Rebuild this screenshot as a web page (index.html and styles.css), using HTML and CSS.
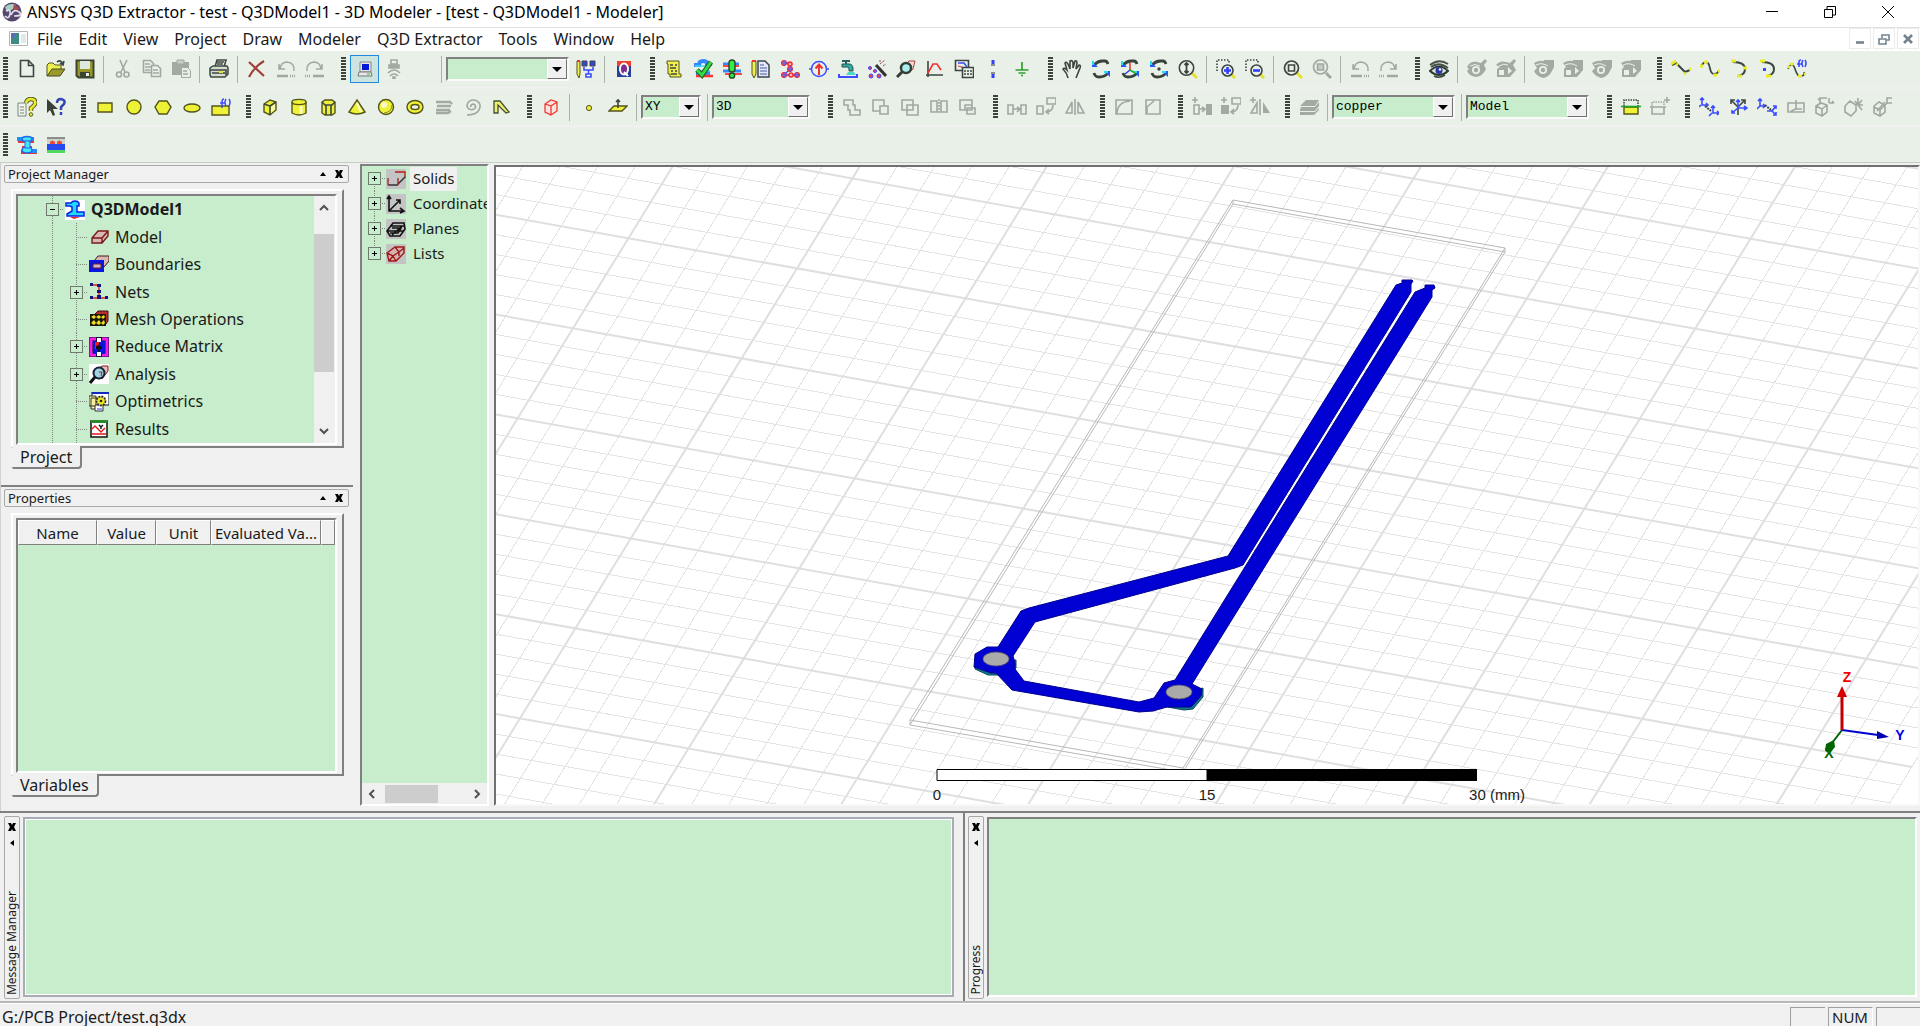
FILE: index.html
```html
<!DOCTYPE html>
<html lang="en">
<head>
<meta charset="utf-8">
<title>ANSYS Q3D Extractor - test - Q3DModel1 - 3D Modeler</title>
<link rel="stylesheet" href="styles.css">
</head>
<body>
<svg class="sprite" aria-hidden="true">
  <!-- file and edit -->
  <symbol id="new" viewBox="0 0 20 20"><path d="M3.500 1.500h8l5 5v11h-13z" class="ol"/><path d="M11.500 1.500v5h5" class="ol"/></symbol>
  <symbol id="open" viewBox="0 0 20 20"><path d="M1 17V6l2-2h4l2 2h6v4" class="yl"/><path d="M1 17l5-7h13l-5 7z" fill="#9a9a2c" stroke="#4a4a1c"/><path d="M11 3q4-3 6 2m-3-1l3 2 1-4" class="ol"/></symbol>
  <symbol id="save" viewBox="0 0 20 20"><path d="M1.500 1.500h17v17h-15l-2-2z" fill="#98982a" stroke="#3c4434" stroke-width="2"/><path d="M5 2h10v8H5z" fill="#dfe8dc"/><path d="M5 13h10v5H5z" fill="#3c4434"/><path d="M11 14h3v3h-3z" fill="#e8f0e8"/></symbol>
  <symbol id="cut" viewBox="0 0 20 20"><g class="gr"><path d="M7 1l5 12M14 1L8 13"/><circle cx="6" cy="15.500" r="2.500"/><circle cx="13.500" cy="15.500" r="2.500"/></g></symbol>
  <symbol id="copy" viewBox="0 0 20 20"><g class="gr"><path d="M1.500 1.500h7l3 3v9h-10z"/><path d="M9.500 6.500h6l3 3v8h-9z" fill="#e8f0e8"/><path d="M3 5h5M3 8h6M3 11h5M11 11h5M11 14h6"/></g></symbol>
  <symbol id="paste" viewBox="0 0 20 20"><path d="M1 3h17v13H1z" fill="#a2aaa2"/><path d="M6 1h7v4H6z" fill="#c6cec6" stroke="#a2aaa2"/><path d="M10.500 8.500h6l3 3v7h-9z" fill="#e8f0e8" stroke="#a2aaa2"/><path d="M12 12h4M12 15h5" class="gr"/></symbol>
  <symbol id="print" viewBox="0 0 20 20"><path d="M6 8l2-7h9l-2 7z" fill="#fff" class="ol"/><path d="M8 3h7M8 5h6" class="ol"/><path d="M1 9l3-2h14l1 2v6l-3 3H2l-1-2z" fill="#d4dcd0" stroke="#3c4640" stroke-width="1.500"/><path d="M1 11h16v5M3 14h13" class="ol"/><path d="M10 12h4v2h-4z" fill="#e6e63a"/></symbol>
  <symbol id="delete" viewBox="0 0 20 20"><path d="M2 3l15 14M17 2Q8 7 2 18" fill="none" stroke="#a04038" stroke-width="2.200"/></symbol>
  <symbol id="undo" viewBox="0 0 20 20"><g class="gr"><path d="M4 10Q5 3 11 3q8 1 7 9M3 5v5h6" stroke-width="1.500"/><path d="M1 17h11" stroke-width="2.500"/><path d="M14 17h6" stroke-width="2.500" stroke-dasharray="1 1"/></g></symbol>
  <symbol id="redo" viewBox="0 0 20 20"><g class="gr"><path d="M16 10Q15 3 9 3Q1 4 2 12M17 5v5h-6" stroke-width="1.500"/><path d="M8 17h11" stroke-width="2.500"/><path d="M0 17h6" stroke-width="2.500" stroke-dasharray="1 1"/></g></symbol>
  <symbol id="local" viewBox="0 0 20 20"><path d="M5 3h11v10H5z" fill="#e4e4e4" stroke="#888"/><path d="M7 5h7v6H7z" fill="#0018d8"/><path d="M4 13h12l1 4H3z" fill="#e8e8e8" stroke="#777"/><path d="M12 15h3" stroke="#2c2" /></symbol>
  <symbol id="queue" viewBox="0 0 20 20"><g class="gr"><path d="M7 1h6v4H7z"/><path d="M5 6h10v3H5z" fill="#a2aaa2"/><path d="M4 14q6-6 12 0M6 17q4-4 8 0"/><path d="M9 18h2v2H9z" fill="#a2aaa2"/></g></symbol>
  <symbol id="edit-net" viewBox="0 0 20 20"><path d="M1 2h3v13l-1 4-2-4z" class="yl"/><path d="M1 1h3v2H1z" fill="#e33"/><path d="M6 2h5v5H6zM14 2h5v5h-5z" fill="#3448c8" stroke="#445"/><path d="M8 8v3h9V8M12.500 11v4" class="bl"/><path d="M10 15h5v3h-5z" fill="#fff" class="bl"/></symbol>
  <symbol id="qbox" viewBox="0 0 20 20"><path d="M3 2h14v16H3z" fill="#26409c"/><path d="M3 2h14v5H3z" fill="#f04030"/><ellipse cx="10" cy="10" rx="4" ry="5.500" fill="#7c2f8c" stroke="#fff" stroke-width="2"/><path d="M10 13l4 4" stroke="#fff" stroke-width="2"/></symbol>
  <!-- design actions -->
  <symbol id="list" viewBox="0 0 20 20"><path d="M3 2h12v13h2v3H6v-3H4V5H3z" class="yl"/><path d="M6 6h3m2 0h2M6 9h6M7 12h2m2 0h2M7 15h6" class="ol"/></symbol>
  <symbol id="validate" viewBox="0 0 20 20"><path d="M1 6h5q0-4 4-4t4 3h5M3 14h14" fill="none" stroke="#38f" stroke-width="4"/><path d="M2 7h16M4 12h13" stroke="#3df" stroke-width="1.500"/><path d="M3 17h17" stroke="#f33" stroke-width="2.500"/><path d="M4 11l5 5L18 3" fill="none" stroke="#265c26" stroke-width="5"/><path d="M4 11l5 5L18 3" fill="none" stroke="#3d4" stroke-width="3"/></symbol>
  <symbol id="analyze" viewBox="0 0 20 20"><path d="M1 5h16M1 12h18" stroke="#38f" stroke-width="3"/><path d="M1 7h16M3 15h17" stroke="#f44" stroke-width="2"/><rect x="7" y="1" width="6" height="12" rx="3" fill="#3e4" stroke="#274c27" stroke-width="1.500"/><circle cx="10" cy="16.500" r="2.600" fill="#3e4" stroke="#274c27" stroke-width="1.500"/></symbol>
  <symbol id="notes" viewBox="0 0 20 20"><path d="M1 2h4v13l-2 4-2-4z" class="yl"/><path d="M1 1h4v2H1z" fill="#e33"/><path d="M7 2h7l4 4v12H7z" fill="#e4e8f8" stroke="#3c4650" stroke-width="1.500"/><path d="M9 6h4M9 9h7M9 12h7M9 15h7" stroke="#4458a8"/></symbol>
  <symbol id="netid" viewBox="0 0 20 20"><path d="M4 4h5l1 6-6 6h13" fill="none" stroke="#3c4cff" stroke-width="1.300"/><g fill="#fbb" stroke="#f03030" stroke-width="1.600"><circle cx="4" cy="4" r="2.200"/><circle cx="10" cy="5" r="2"/><circle cx="10" cy="10" r="2.200"/><circle cx="4" cy="16" r="2.200"/><circle cx="11" cy="16" r="2"/><circle cx="17" cy="16" r="2.200"/></g><path d="M4 1v6M1 4h6M10 7v6M7 10h6M4 13v6M1 16h6M17 13v6M14 16h6" stroke="#3c4cff"/></symbol>
  <symbol id="source" viewBox="0 0 20 20"><circle cx="10" cy="10" r="7.500" class="bl" stroke-width="1.500"/><path d="M10 16V6M6.500 9.500L10 5.500l3.500 4" fill="none" stroke="#f03030" stroke-width="2"/><path d="M0 10h3M17 10h3" class="bl"/></symbol>
  <symbol id="tap" viewBox="0 0 20 20"><path d="M4 2h8M8 2v3" fill="none" stroke="#2a6060" stroke-width="2"/><path d="M4 5h7q4 0 4 5v2h-4v-2q0-2-2-2H4z" fill="#2ab0a0" stroke="#2a5050"/><path d="M10 13h6l2 3H8z" fill="#4cd8c8"/><path d="M1 15v3h18v-3" class="bl" stroke-width="2"/></symbol>
  <symbol id="wand" viewBox="0 0 20 20"><path d="M9 6l10 11" stroke="#333" stroke-width="3"/><g fill="#e44" stroke="#44f"><circle cx="3" cy="9" r="1.500"/><circle cx="8" cy="12" r="1.500"/><circle cx="4" cy="17" r="2"/><circle cx="12" cy="17" r="2"/></g><path d="M13 5l5-4M16 7l3-2M12 2l2 0" stroke="#844" stroke-dasharray="2 1"/></symbol>
  <symbol id="solve" viewBox="0 0 20 20"><path d="M9 6l4-4h6l-2 8-3 3" fill="#f4dcd8" stroke="#b04038"/><circle cx="10" cy="9" r="5" fill="#aee" stroke="#334038" stroke-width="2.500"/><path d="M6 13l-5 5" stroke="#333c38" stroke-width="3"/></symbol>
  <symbol id="chart" viewBox="0 0 20 20"><path d="M3 2v16M1 16h17" class="ol"/><path d="M3 14L8 5h4l4 6" fill="none" stroke="#f03030" stroke-width="1.600"/></symbol>
  <symbol id="report" viewBox="0 0 20 20"><path d="M1.500 1.500h13v10h-13z" class="ol"/><path d="M4 4h6l3 4" class="bl"/><path d="M4 7q5 0 6 4" fill="none" stroke="#e33"/><path d="M8.500 8.500h11v10h-11z" fill="#e8f0e8" class="ol"/><path d="M10 12h8M10 15h8" class="ol" stroke-dasharray="2 1"/></symbol>
  <symbol id="sweep" viewBox="0 0 20 20"><path d="M10 1v5M10 14v5" stroke="#3040ff" stroke-width="3"/><path d="M8 6h4M8 14h4" stroke="#889088" stroke-width="2"/></symbol>
  <symbol id="ground" viewBox="0 0 20 20"><path d="M10 3v8M3.500 11h13M6.500 14h7M9 16.500h2" stroke="#30a030" stroke-width="1.700"/></symbol>
  <!-- view -->
  <symbol id="pan" viewBox="0 0 20 20"><path d="M6 19Q5 14 1 10q1-2 4 1L3 4q1-2 3 1l2 5L8 2q2-1 3 1v6l2-7q2-1 2 2l-1 6 3-4q2 0 1 3l-4 10" class="ol"/></symbol>
  <symbol id="rotate" viewBox="0 0 20 20"><path d="M3 6q4-4 8-4h3q2 0 3 3M3 14q1 4 5 4 6 0 9-4" fill="none" stroke="#384238" stroke-width="2.800"/><path d="M1 2v6h6zM19 18v-6h-6z" fill="#2858f0"/><path d="M1 2h2v4H1zM13 12h4v2h-4z" fill="#2de"/></symbol>
  <symbol id="rotaxis" viewBox="0 0 20 20"><use href="#rotate"/><path d="M10 4v7" stroke="#f03030" stroke-width="1.500"/><path d="M10 11l-5 4" stroke="#3030ff" stroke-width="1.500"/><path d="M10 11l5 3" stroke="#20b020" stroke-width="1.500"/></symbol>
  <symbol id="rotcenter" viewBox="0 0 20 20"><use href="#rotate"/><circle cx="10" cy="10" r="1.700" fill="#384238"/></symbol>
  <symbol id="zoomdyn" viewBox="0 0 20 20"><path d="M14 14l5 5" stroke="#e4e030" stroke-width="3"/><circle cx="8.500" cy="9" r="7.200" class="ol"/><path d="M8.500 4v10M6.500 6l2-2 2 2M6.500 12l2 2 2-2" class="ol" stroke-width="1.800"/></symbol>
  <symbol id="zoomin" viewBox="0 0 20 20"><path d="M1 12V1h12v4" class="ol" stroke-dasharray="1.500 1.500"/><path d="M15 15l4 4" stroke="#e4e030" stroke-width="3"/><circle cx="11.500" cy="11.500" r="5.500" class="ol"/><path d="M8 11.500h7M11.500 8v7" stroke="#3040ff" stroke-width="2.600"/></symbol>
  <symbol id="zoomout" viewBox="0 0 20 20"><path d="M1 12V1h12v4" class="ol" stroke-dasharray="1.500 1.500"/><path d="M15 15l4 4" stroke="#e4e030" stroke-width="3"/><circle cx="11.500" cy="11.500" r="5.500" class="ol"/><path d="M8 11.500h7" stroke="#3040ff" stroke-width="2.600"/></symbol>
  <symbol id="fitall" viewBox="0 0 20 20"><path d="M14 14l5 5" stroke="#e4e030" stroke-width="3"/><circle cx="8.500" cy="9" r="7" class="ol" stroke-width="1.700"/><path d="M5.500 6h6v6h-6z" class="ol"/></symbol>
  <symbol id="fitsel" viewBox="0 0 20 20"><g class="gr"><path d="M14 14l5 5" stroke-width="3"/><circle cx="8.500" cy="8" r="7" stroke-width="1.700"/><path d="M5.500 5h6v6h-6z" fill="#c4ccc4"/></g></symbol>
  <symbol id="eye" viewBox="0 0 20 20"><path d="M1 6q9-7 18-1M2 8q8-6 17 1" fill="none" stroke="#48544a" stroke-width="1.800"/><path d="M1 12q9-9 18 0-9 8-18 0z" fill="#d8e4dc" stroke="#303c34" stroke-width="2"/><circle cx="10" cy="11.500" r="3.500" fill="#2838a8"/><circle cx="11" cy="10.500" r="1.200" fill="#fff"/><path d="M5 17q5 3 11-1" class="ol"/></symbol>
  <symbol id="eyeoff" viewBox="0 0 20 20"><path d="M0 8q3-6 10-5l4 1 4-4 2 2-3 4 2 4q-3 7-10 8Q2 17 0 12l2-2z" fill="#a2aaa2"/><circle cx="9" cy="11" r="4" fill="#e8f0e8"/><circle cx="9" cy="11" r="2.200" fill="#a2aaa2"/><path d="M3 7q5-3 10 0" stroke="#e8f0e8" fill="none"/></symbol>
  <symbol id="boxoff" viewBox="0 0 20 20"><path d="M0 6q4-5 10-3l4 1 4-4 2 2-3 4 3 5-6 7H1v-8l3-2z" fill="#a2aaa2"/><path d="M3 11h5v5H3zM12 8l4 4-4 3z" fill="#e8f0e8"/><path d="M3 7q5-3 9-1" stroke="#e8f0e8" fill="none"/></symbol>
  <symbol id="eyeshow" viewBox="0 0 20 20"><path d="M0 4q5-3 10-2V1h10v7l-2 4q-3 6-9 7Q2 17 0 12l3-3z" fill="#a2aaa2"/><circle cx="9" cy="11" r="4" fill="#e8f0e8"/><circle cx="9" cy="11" r="2.200" fill="#a2aaa2"/><path d="M2 6q6-3 12 1" stroke="#e8f0e8" fill="none"/></symbol>
  <symbol id="boxshow" viewBox="0 0 20 20"><path d="M0 4q5-3 10-2V1h10v10l-6 7H1v-8l2-2z" fill="#a2aaa2"/><path d="M3 11h5v5H3zM12 8l4 4-4 3z" fill="#e8f0e8"/><path d="M2 6q6-3 12 1" stroke="#e8f0e8" fill="none"/></symbol>
  <!-- curves -->
  <symbol id="line" viewBox="0 0 20 20"><path d="M1 6l4-2 9 9 5-2" class="ol" stroke-width="2"/><path d="M0 5l5-3M5 5l2 1M13 14l2 1M18 10h2" stroke="#e8ec28" stroke-width="3"/></symbol>
  <symbol id="spline" viewBox="0 0 20 20"><path d="M1 8Q4 1 8 4c3 3 1 11 6 11q4 0 5-4" class="ol" stroke-width="1.800"/><path d="M0 7h3M4 3h4M13 16h4M18 12h2" stroke="#e8ec28" stroke-width="3"/></symbol>
  <symbol id="arc3" viewBox="0 0 20 20"><path d="M4 3q12 0 12 7 0 6-7 7" class="ol" stroke-width="2"/><path d="M2 2h5M14 9h4M8 17h5" stroke="#e8ec28" stroke-width="3"/></symbol>
  <symbol id="arcc" viewBox="0 0 20 20"><path d="M4 3q12 0 12 7 0 6-7 7" class="ol" stroke-width="2"/><path d="M2 2h5M8 17h5" stroke="#e8ec28" stroke-width="3"/><path d="M5 9h3v3H5z" fill="#3848ff"/></symbol>
  <symbol id="eqcurve" viewBox="0 0 20 20"><path d="M1 10q4-9 7 0t6 7q4 0 3-4" class="ol"/><path d="M0 8h3M3 5h4M11 17h4M17 15h2" stroke="#e8ec28" stroke-width="2.500"/><path d="M12 8V3q0-2 2-2M10 5h5M16 1q-2 3 0 7M18 1q2 3 0 7" class="bl"/></symbol>
  <!-- help -->
  <symbol id="help" viewBox="0 0 20 20"><path d="M1 6h8v13H1z" fill="#eef4ee" stroke="#7c867c"/><path d="M3 10h4M3 13h4M3 16h4" class="gr"/><path d="M9 6q1-4 5-4 5 0 4 5-1 2-4 4v3" fill="none" stroke="#5c5c20" stroke-width="4.500"/><path d="M9 6q1-4 5-4 5 0 4 5-1 2-4 4v3" fill="none" stroke="#eaea30" stroke-width="2.600"/><circle cx="14" cy="17.500" r="1.800" fill="#eaea30" stroke="#5c5c20"/></symbol>
  <symbol id="whatsthis" viewBox="0 0 20 20"><path d="M1 2v14l3-3 3 6 2-1-2-6h5z" fill="#384038"/><path d="M11 6q0-4 4-4 5 1 3 5l-3 3v3M15 15v3" fill="none" stroke="#3444b4" stroke-width="2.500"/></symbol>
  <!-- 2D primitives -->
  <symbol id="rect" viewBox="0 0 20 20"><path d="M3 6h14v9H3z" class="yf"/></symbol>
  <symbol id="circle" viewBox="0 0 20 20"><circle cx="10" cy="10" r="7" class="yf"/></symbol>
  <symbol id="polygon" viewBox="0 0 20 20"><path d="M6 4h8l4 6-4 7H6l-4-7z" class="yf"/></symbol>
  <symbol id="ellipse" viewBox="0 0 20 20"><ellipse cx="10" cy="11" rx="8" ry="4" class="yf"/></symbol>
  <symbol id="eqsurf" viewBox="0 0 20 20"><path d="M1 9h17v9H1z" class="yf"/><path d="M11 11V5q0-3 2-3M9 6h5M15 2q-2 3 0 7M18 2q2 3 0 7" class="bl" stroke-width="1.500"/></symbol>
  <!-- 3D primitives -->
  <symbol id="box" viewBox="0 0 20 20"><path d="M4 7l6-4 6 2v8l-6 5-6-3z" class="yf"/><path d="M4 7l6 2v9M10 9l6-4" class="ol"/><path d="M11 10l4-3v5l-4 4z" fill="#f6f8b0"/></symbol>
  <symbol id="cyl" viewBox="0 0 20 20"><path d="M3 5v11q7 4 14 0V5" class="yf"/><ellipse cx="10" cy="5" rx="7" ry="2.600" class="yf"/><path d="M12 9v8" stroke="#fafac8" stroke-width="3"/></symbol>
  <symbol id="prism" viewBox="0 0 20 20"><path d="M4 5l3-2h7l3 2v11l-3 2H7l-3-2z" class="yf"/><path d="M4 5l3 3h7l3-3M8 8v10M13 8v10" class="ol"/></symbol>
  <symbol id="cone" viewBox="0 0 20 20"><path d="M10 3l8 12q-8 4-16 0z" class="yf"/><path d="M10 6l4 9" stroke="#fafac8" stroke-width="2"/></symbol>
  <symbol id="sphere" viewBox="0 0 20 20"><circle cx="10" cy="10" r="7.500" class="yf"/><circle cx="8" cy="8" r="3" fill="#fafac8"/><path d="M16 8q0 7-8 8" fill="none" stroke="#8a8a30"/></symbol>
  <symbol id="torus" viewBox="0 0 20 20"><ellipse cx="10" cy="10" rx="8" ry="6.500" class="yf"/><ellipse cx="10" cy="10" rx="4" ry="2.500" fill="#e8f0e8" stroke="#54541c" stroke-width="1.500"/></symbol>
  <symbol id="helix" viewBox="0 0 20 20"><path d="M2 5h14l2 2M3 9h14M2 13h14M2 16h12l3-2" fill="none" stroke="#a2aaa2" stroke-width="2.400"/></symbol>
  <symbol id="spiral" viewBox="0 0 20 20"><path d="M4 18q9 0 12-5c3-6-1-10-6-10s-8 6-4 9c4 2 8-1 6-4-2-2-5 0-4 2" class="gr"/></symbol>
  <symbol id="bondwire" viewBox="0 0 20 20"><path d="M2 16V4h6l9 11-3 1-8-8v8z" fill="#eef070" stroke="#44502c" stroke-width="1.300"/></symbol>
  <symbol id="redbox" viewBox="0 0 20 20"><path d="M4 7l6-4 6 2v9l-6 4-6-3zM4 7l6 2v9M10 9l6-4" fill="#f8e4e0" stroke="#f03830" stroke-width="1.300"/></symbol>
  <symbol id="point" viewBox="0 0 20 20"><circle cx="10" cy="11" r="2.600" fill="#f0f030" stroke="#54541c"/></symbol>
  <symbol id="plane" viewBox="0 0 20 20"><path d="M1 14l5-5h13l-5 5z" class="yf"/><path d="M10 11V3M8 5l2-2 2 2" class="ol"/></symbol>
  <!-- booleans and transforms -->
  <symbol id="unite" viewBox="0 0 20 20"><path d="M2 3h9v5h2v5h5v5H8v-5H6V8H2z" class="gr"/></symbol>
  <symbol id="subtract" viewBox="0 0 20 20"><path d="M2 3h11v6H9v5H2zM9 9h8v8H9z" class="gr"/></symbol>
  <symbol id="intersect" viewBox="0 0 20 20"><path d="M2 3h11v10H2zM7 8h11v10H7z" class="gr"/></symbol>
  <symbol id="split" viewBox="0 0 20 20"><path d="M8 4H2v11h6zM12 4h6v11h-6z" class="gr"/><path d="M10 2v15" class="gr" stroke-dasharray="2 1"/></symbol>
  <symbol id="imprint" viewBox="0 0 20 20"><path d="M2 3h12v10H2zM7 8h7v5H7zM9 11h8v6H9z" class="gr"/></symbol>
  <symbol id="move" viewBox="0 0 20 20"><path d="M1 8h5v9H1zM14 8h5v9h-5zM6 12h7M10 10l3 2-3 3" class="gr"/></symbol>
  <symbol id="rotobj" viewBox="0 0 20 20"><path d="M1 9h6v8H1zM11 1h9v6h-9zM17 8q0 6-6 7M13 12l-3 3 3 2" class="gr"/></symbol>
  <symbol id="mirror" viewBox="0 0 20 20"><path d="M10 2v16M7 5v11H1zM13 5v11h6z" class="gr"/></symbol>
  <symbol id="fillet" viewBox="0 0 20 20"><path d="M2 3h16v14H2zM3 17q0-12 13-13" class="gr"/></symbol>
  <symbol id="chamfer" viewBox="0 0 20 20"><path d="M3 3h14v14H3zM4 16V10l7-6" class="gr"/></symbol>
  <symbol id="dupline" viewBox="0 0 20 20"><path d="M3 0v6M0 3h6M2 8h5v9H2zM7 12h6M10 10l3 2-3 3" class="gr"/><path d="M14 7h6v11h-6z" fill="#a2aaa2"/></symbol>
  <symbol id="duprot" viewBox="0 0 20 20"><path d="M3 0v6M0 3h6M11 1h9v6h-9zM17 8q0 6-6 7M13 12l-3 3 3 2" class="gr"/><path d="M0 8h8v9H0z" fill="#a2aaa2"/></symbol>
  <symbol id="dupmir" viewBox="0 0 20 20"><path d="M3 0v6M0 3h6M10 2v16M7 6v10H1z" class="gr"/><path d="M13 5v11h7z" fill="#a2aaa2"/></symbol>
  <symbol id="layers" viewBox="0 0 20 20"><path d="M1 9l6-6h13l-4 6zM1 13l1-3h14l4-5v4l-4 5H1zM1 17v-2h15l4-4v2l-5 5H1z" fill="#a2aaa2"/></symbol>
  <symbol id="section" viewBox="0 0 20 20"><path d="M3 9V3h14v6" class="ol" stroke-dasharray="1.500 1"/><path d="M3 10h14v7H3z" class="yf"/><path d="M0 9.500h20" stroke="#20a828" stroke-width="1.600"/></symbol>
  <symbol id="section2" viewBox="0 0 20 20"><path d="M2 9V5h12v4" class="gr" stroke-dasharray="1.500 1"/><path d="M2 10h12v7H2zM0 10h16M17 0v6M14 3h6" class="gr"/></symbol>
  <!-- coordinate systems -->
  <symbol id="csrel" viewBox="0 0 20 20"><path d="M3 1v7h5M2 8L0 10M14 9v7h6M13 16l-3 3M1 3l2-2 2 2M12 11l2-2 2 2M7 6l2 2-2 2M18 14l2 2-2 2" class="bl" stroke-width="1.600"/><path d="M6 9l6 5" class="ol" stroke-width="2" stroke-dasharray="2 1"/></symbol>
  <symbol id="csrot" viewBox="0 0 20 20"><path d="M10 18V10L4 4M10 10l6-6M13 3h4v4M3 7V3h4" class="ol"/><path d="M10 3v8h8M10 11l-6 5M8 5l2-2 2 2M16 9l3 2-3 2M4 13v3h3" class="bl" stroke-width="1.600"/></symbol>
  <symbol id="csboth" viewBox="0 0 20 20"><path d="M3 2v7h5M3 9l-3 3M19 9l-4 5 4 4M15 14h-5M1 4l2-2 2 2M6 7l2 2-2 2M16 9h3v3M16 18h3v-3" class="bl" stroke-width="1.600"/><path d="M8 8l6 5" class="ol" stroke-width="2" stroke-dasharray="2 1"/></symbol>
  <symbol id="csface" viewBox="0 0 20 20"><path d="M2 6h16v9H2zM10 3v9h6M10 12l-5 2" class="gr"/></symbol>
  <symbol id="csobj" viewBox="0 0 20 20"><path d="M1 9l5-3 6 2v7l-5 4-6-3zM1 9l6 3v7M7 12l5-4M5 6V1h7M14 6V1M14 6h5M3 3l2-2M17 4l2 2" class="gr"/></symbol>
  <symbol id="csobj2" viewBox="0 0 20 20"><path d="M1 9l5-5 6 4v6l-5 5-6-4zM14 8V1M14 8h5M14 8l-3-4M14 8l4 5M18 3l-4 5" class="gr"/></symbol>
  <symbol id="csobj3" viewBox="0 0 20 20"><path d="M1 9l5-4 6 3v7l-5 4-6-3zM1 10l6 3v6M7 13l7-7M14 7V1h5M14 6h5M4 14l8-9" class="gr"/></symbol>
  <!-- design types -->
  <symbol id="q3d" viewBox="0 0 20 20"><path d="M1 6h16v2H1zM4 15h16v4H4zM5 11h10v2H5z" fill="#e03838"/><path d="M0 4h6M14 4h3M6 16h14" stroke="#2090f8" stroke-width="4"/><ellipse cx="10" cy="4" rx="5" ry="2.500" fill="#3fe8f4" stroke="#2468f0" stroke-width="1.500"/><ellipse cx="10" cy="15" rx="5" ry="3" fill="#3fe8f4" stroke="#2468f0" stroke-width="1.500"/><path d="M8 6h5v7H8z" fill="#3fe8f4" stroke="#2468f0"/></symbol>
  <symbol id="q2d" viewBox="0 0 20 20"><path d="M1 3h18v12H1z" fill="#cad4ca"/><path d="M1 2h18v2H1z" fill="#889088"/><path d="M1 9h18v6H1z" fill="#2848f0"/><path d="M4 9V7q2-3 5 0v2zM11 9V7q2-3 5 0v2z" fill="#e84c38"/><path d="M1 15h18v3H1z" fill="#50d860"/></symbol>
  <!-- project tree -->
  <symbol id="t-q3d" viewBox="0 0 20 20"><path d="M0 0h20v20H0z" fill="#fff"/><path d="M5 17l4 2 6-2z" fill="#f02020"/><path d="M1 3h5q1-2 4-2t4 2v3h-2v6h7v4H2v-2l5-3V7L5 6H1z" fill="#20d8f8" stroke="#1020e0" stroke-width="1.500"/></symbol>
  <symbol id="t-model" viewBox="0 0 20 20"><path d="M3 11l6-7h10v5l-6 7H3zM3 11h10v5M13 11l6-7" fill="#d8b8b4" stroke="#7c1818" stroke-width="1.400"/></symbol>
  <symbol id="t-bound" viewBox="0 0 20 20"><path d="M5 6l4-5h11v5l-5 6" fill="#d8b8b4" stroke="#4c1818"/><path d="M0 5h15v12H0z" fill="#0818e0"/><path d="M4 9h8v4H4z" fill="#c8b8d0" stroke="#7c1818"/></symbol>
  <symbol id="t-nets" viewBox="0 0 20 20"><path d="M3 3h7v6M10 9v7M3 16h14" fill="none" stroke="#e02020" stroke-width="1.400"/><path d="M1 1h3v3H1zM8 2h4v3H8zM8 8h4v3H8zM1 14h3v3H1zM8 13h4v4H8zM16 14h3v3h-3z" fill="#101880"/></symbol>
  <symbol id="t-mesh" viewBox="0 0 20 20"><path d="M6 5l3-3h10v10l-2 3" fill="#b83028" stroke="#401010"/><path d="M1 5h16v12H1z" fill="#181808"/><path d="M2 8l3-2 2 2-2 2zM7 8l3-2 2 2-2 2zM12 8l3-2 1 2-2 2zM2 14l3-3 2 3-2 2zM7 14l3-3 2 3-2 2zM12 14l3-3 1 3-2 2z" fill="#f0e020"/></symbol>
  <symbol id="t-reduce" viewBox="0 0 20 20"><path d="M0 0h20v20H0z" fill="#181030"/><path d="M7 2H2v16h5M13 2h5v16h-5" fill="none" stroke="#f020e8" stroke-width="3"/><path d="M4 4h5v13H4zM11 4h5v13h-5z" fill="#0818d8"/><path d="M8 1h4v4H8zM8 15h4v4H8z" fill="#fff"/><path d="M6 5h4v3H8v4H6z" fill="#f01818"/><path d="M7 9h6v3H7z" fill="#111"/></symbol>
  <symbol id="t-analysis" viewBox="0 0 20 20"><path d="M0 0h20v20H0z" fill="#fff"/><path d="M8 6l5-4h6v5l-6 8" fill="#e0c0bc" stroke="#901818"/><circle cx="10" cy="9" r="5.500" fill="#a0d4e0" stroke="#102038" stroke-width="2"/><path d="M10 8h3l-1 4" fill="none" stroke="#902020"/><path d="M6 13l-5 6" stroke="#101018" stroke-width="3"/></symbol>
  <symbol id="t-opt" viewBox="0 0 20 20"><path d="M3 0h17v13H3z" fill="#fff" stroke="#111"/><path d="M3 0h17v2H3z" fill="#1028c0"/><path d="M0 4h7v10H0zM2 6h8v11H2z" fill="#f8f0a0" stroke="#333"/><path d="M6 13h8v6H6z" fill="#fff" stroke="#333"/><path d="M8 17h5" stroke="#33f"/><circle cx="12" cy="9" r="4.500" fill="#f0e820" stroke="#333" stroke-dasharray="2 1" stroke-width="1.800"/><circle cx="12" cy="9" r="1.300" fill="#222"/></symbol>
  <symbol id="t-results" viewBox="0 0 20 20"><path d="M2 2h16v16H2z" fill="#fff" stroke="#111" stroke-width="1.500"/><path d="M2 1h16v3H2z" fill="#28882c"/><path d="M3 10l3-3 6 6 4-4M3 15h14" fill="none" stroke="#e01818" stroke-width="1.400"/><path d="M10 6l2 2 2-2M12 8v2" fill="none" stroke="#111" stroke-width="1.400"/></symbol>
  <!-- history tree -->
  <symbol id="h-solids" viewBox="0 0 20 20"><path d="M0 0h20v20H0z" fill="#c4c4c4"/><path d="M9 3h10v6" fill="none" stroke="#b81818" stroke-width="1.300"/><path d="M19 8l-7 7M2 16h10" fill="none" stroke="#333" stroke-width="1.500"/><path d="M2 9v7M12 9v7" stroke="#a02020" stroke-width="1.300"/></symbol>
  <symbol id="h-coord" viewBox="0 0 20 20"><path d="M0 0h20v20H0z" fill="#c4c4c4"/><path d="M3 2v15h14M3 17L14 6M1 5l2-3 2 3M14 14l4 3-4 2M10 6h4v4" fill="none" stroke="#111" stroke-width="1.600"/></symbol>
  <symbol id="h-planes" viewBox="0 0 20 20"><path d="M0 0h20v20H0z" fill="#c4c4c4"/><path d="M1 12l6-8h11l1 6-5 7H4zM4 7h15M1 12h16M6 9h9l-3 5H4M6 16l10-9" fill="none" stroke="#111" stroke-width="1.600"/></symbol>
  <symbol id="h-lists" viewBox="0 0 20 20"><path d="M0 0h20v20H0z" fill="#c4c4c4"/><path d="M1 9l8-6h9v6l-8 8H3zM1 9l6 3-4 5M7 12l6-4 5-4M10 17l-3-5M9 3l4 5v4" fill="#d4b4b0" stroke="#a01818" stroke-width="1.400"/></symbol>
</svg>

<header class="titlebar">
  <svg class="app-icon" viewBox="0 0 20 20" aria-hidden="true"><circle cx="10" cy="10" r="9.500" fill="#54486c"/><path d="M3 5q5-5 11-2l-3 4-6 3z" fill="#a8d0c0"/><path d="M12 2l5 4-2 4-4-3z" fill="#a84850"/><path d="M4 9q5-3 4 3t-5 2M9 13q3-7 8-3t-5 4" fill="none" stroke="#e4dcf0" stroke-width="1.700"/></svg>
  <h1 class="title">ANSYS Q3D Extractor - test - Q3DModel1 - 3D Modeler - [test - Q3DModel1 - Modeler]</h1>
  <div class="window-controls">
    <button class="win-btn" aria-label="Minimize"><svg viewBox="0 0 12 12"><path d="M0 5.500h12"/></svg></button>
    <button class="win-btn" aria-label="Restore"><svg viewBox="0 0 12 12"><path d="M.5 3.500h8v8h-8zM3 3.500v-3h8.500V9h-3"/></svg></button>
    <button class="win-btn" aria-label="Close"><svg viewBox="0 0 12 12"><path d="M0 0l12 12M12 0L0 12"/></svg></button>
  </div>
</header>

<nav class="menubar">
  <svg class="doc-icon" viewBox="0 0 19 15" aria-hidden="true"><path d="M.5.5h18v14H.5z" fill="#fff" stroke="#b4b4b4"/><path d="M2 2h8v11H2z" fill="#3c8c84"/><path d="M2 2h4v5H2z" fill="#5870b0"/><path d="M12 3h5v9h-5z" fill="#e0e8e8"/></svg>
  <button>File</button><button>Edit</button><button>View</button><button>Project</button><button>Draw</button><button>Modeler</button><button>Q3D Extractor</button><button>Tools</button><button>Window</button><button>Help</button>
  <div class="mdi-controls">
    <button aria-label="Minimize document"><svg viewBox="0 0 12 12"><path d="M2 9.500h8"/></svg></button>
    <button aria-label="Restore document"><svg viewBox="0 0 12 12"><path class="thin" d="M1 6h7v5H1zM4 5V2h7v5H9"/></svg></button>
    <button aria-label="Close document"><svg viewBox="0 0 12 12"><path d="M2 2l8 8M10 2l-8 8"/></svg></button>
  </div>
</nav>

<div class="toolbars">
  <div class="toolbar-row row-standard">
    <div class="toolbar" role="toolbar" aria-label="Standard">
      <button class="tool" aria-label="New"><svg><use href="#new"/></svg></button>
      <button class="tool" aria-label="Open"><svg><use href="#open"/></svg></button>
      <button class="tool" aria-label="Save"><svg><use href="#save"/></svg></button>
      <i class="sep"></i>
      <button class="tool" aria-label="Cut"><svg><use href="#cut"/></svg></button>
      <button class="tool" aria-label="Copy"><svg><use href="#copy"/></svg></button>
      <button class="tool" aria-label="Paste"><svg><use href="#paste"/></svg></button>
      <i class="sep"></i>
      <button class="tool" aria-label="Print"><svg><use href="#print"/></svg></button>
      <i class="sep"></i>
      <button class="tool" aria-label="Delete"><svg><use href="#delete"/></svg></button>
      <button class="tool" aria-label="Undo"><svg><use href="#undo"/></svg></button>
      <button class="tool" aria-label="Redo"><svg><use href="#redo"/></svg></button>
    </div>
    <div class="toolbar" role="toolbar" aria-label="Simulation">
      <button class="tool active" aria-label="Local machine"><svg><use href="#local"/></svg></button>
      <button class="tool" aria-label="Queue"><svg><use href="#queue"/></svg></button>
      <span class="tool-space"></span>
      <i class="sep"></i>
      <label class="combo combo-l"><select aria-label="Configuration"><option></option></select><span class="drop"></span></label>
      <button class="tool" aria-label="Edit configuration"><svg><use href="#edit-net"/></svg></button>
      <i class="sep"></i>
      <button class="tool" aria-label="Insert Q3D design"><svg><use href="#qbox"/></svg></button>
    </div>
    <div class="toolbar" role="toolbar" aria-label="Q3D Extractor">
      <button class="tool" aria-label="List"><svg><use href="#list"/></svg></button>
      <button class="tool" aria-label="Validate"><svg><use href="#validate"/></svg></button>
      <button class="tool" aria-label="Analyze all"><svg><use href="#analyze"/></svg></button>
      <button class="tool" aria-label="Edit notes"><svg><use href="#notes"/></svg></button>
      <button class="tool" aria-label="Assign net"><svg><use href="#netid"/></svg></button>
      <button class="tool" aria-label="Assign source"><svg><use href="#source"/></svg></button>
      <button class="tool" aria-label="Assign sink"><svg><use href="#tap"/></svg></button>
      <button class="tool" aria-label="Auto identify nets"><svg><use href="#wand"/></svg></button>
      <button class="tool" aria-label="Add solution setup"><svg><use href="#solve"/></svg></button>
      <button class="tool" aria-label="Create report"><svg><use href="#chart"/></svg></button>
      <button class="tool" aria-label="Matrix report"><svg><use href="#report"/></svg></button>
      <button class="tool" aria-label="Sweep"><svg><use href="#sweep"/></svg></button>
      <button class="tool" aria-label="Ground"><svg><use href="#ground"/></svg></button>
    </div>
    <div class="toolbar" role="toolbar" aria-label="View">
      <button class="tool" aria-label="Pan"><svg><use href="#pan"/></svg></button>
      <button class="tool" aria-label="Rotate"><svg><use href="#rotate"/></svg></button>
      <button class="tool" aria-label="Rotate around axis"><svg><use href="#rotaxis"/></svg></button>
      <button class="tool" aria-label="Rotate around centre"><svg><use href="#rotcenter"/></svg></button>
      <button class="tool" aria-label="Dynamic zoom"><svg><use href="#zoomdyn"/></svg></button>
      <i class="sep"></i>
      <button class="tool" aria-label="Zoom in"><svg><use href="#zoomin"/></svg></button>
      <button class="tool" aria-label="Zoom out"><svg><use href="#zoomout"/></svg></button>
      <i class="sep"></i>
      <button class="tool" aria-label="Fit all"><svg><use href="#fitall"/></svg></button>
      <button class="tool" aria-label="Fit selection"><svg><use href="#fitsel"/></svg></button>
      <i class="sep"></i>
      <button class="tool" aria-label="Undo view"><svg><use href="#undo"/></svg></button>
      <button class="tool" aria-label="Redo view"><svg><use href="#redo"/></svg></button>
    </div>
    <div class="toolbar" role="toolbar" aria-label="Visibility">
      <button class="tool" aria-label="Visibility"><svg><use href="#eye"/></svg></button>
      <i class="sep"></i>
      <button class="tool" aria-label="Hide in all views"><svg><use href="#eyeoff"/></svg></button>
      <button class="tool" aria-label="Hide in active view"><svg><use href="#boxoff"/></svg></button>
      <i class="sep"></i>
      <button class="tool" aria-label="Show in all views"><svg><use href="#eyeshow"/></svg></button>
      <button class="tool" aria-label="Show in active view"><svg><use href="#boxshow"/></svg></button>
      <button class="tool" aria-label="Show only in all views"><svg><use href="#eyeshow"/></svg></button>
      <button class="tool" aria-label="Show only in active view"><svg><use href="#boxshow"/></svg></button>
    </div>
    <div class="toolbar" role="toolbar" aria-label="Draw curve">
      <button class="tool" aria-label="Line"><svg><use href="#line"/></svg></button>
      <button class="tool" aria-label="Spline"><svg><use href="#spline"/></svg></button>
      <button class="tool" aria-label="Three point arc"><svg><use href="#arc3"/></svg></button>
      <button class="tool" aria-label="Centre point arc"><svg><use href="#arcc"/></svg></button>
      <button class="tool" aria-label="Equation curve"><svg><use href="#eqcurve"/></svg></button>
    </div>
  </div>

  <div class="toolbar-row row-model">
    <div class="toolbar" role="toolbar" aria-label="Help">
      <button class="tool" aria-label="Help contents"><svg><use href="#help"/></svg></button>
      <button class="tool" aria-label="What's this"><svg><use href="#whatsthis"/></svg></button>
    </div>
    <div class="toolbar" role="toolbar" aria-label="Draw sheets">
      <button class="tool" aria-label="Rectangle"><svg><use href="#rect"/></svg></button>
      <button class="tool" aria-label="Circle"><svg><use href="#circle"/></svg></button>
      <button class="tool" aria-label="Regular polygon"><svg><use href="#polygon"/></svg></button>
      <button class="tool" aria-label="Ellipse"><svg><use href="#ellipse"/></svg></button>
      <button class="tool" aria-label="Equation surface"><svg><use href="#eqsurf"/></svg></button>
    </div>
    <div class="toolbar" role="toolbar" aria-label="Draw solids">
      <button class="tool" aria-label="Box"><svg><use href="#box"/></svg></button>
      <button class="tool" aria-label="Cylinder"><svg><use href="#cyl"/></svg></button>
      <button class="tool" aria-label="Polyhedron"><svg><use href="#prism"/></svg></button>
      <button class="tool" aria-label="Cone"><svg><use href="#cone"/></svg></button>
      <button class="tool" aria-label="Sphere"><svg><use href="#sphere"/></svg></button>
      <button class="tool" aria-label="Torus"><svg><use href="#torus"/></svg></button>
      <button class="tool" aria-label="Helix"><svg><use href="#helix"/></svg></button>
      <button class="tool" aria-label="Spiral"><svg><use href="#spiral"/></svg></button>
      <button class="tool" aria-label="Bondwire"><svg><use href="#bondwire"/></svg></button>
    </div>
    <div class="toolbar toolbar-end-combo" role="toolbar" aria-label="Drawing plane">
      <button class="tool" aria-label="Region"><svg><use href="#redbox"/></svg></button>
      <i class="sep"></i>
      <button class="tool" aria-label="Point"><svg><use href="#point"/></svg></button>
      <button class="tool" aria-label="Plane"><svg><use href="#plane"/></svg></button>
      <i class="sep"></i>
      <label class="combo combo-s"><select aria-label="Plane"><option>XY</option></select><span class="drop"></span></label>
      <i class="sep"></i>
      <label class="combo combo-m"><select aria-label="Movement mode"><option>3D</option></select><span class="drop"></span></label>
    </div>
    <div class="toolbar" role="toolbar" aria-label="Boolean">
      <button class="tool" aria-label="Unite"><svg><use href="#unite"/></svg></button>
      <button class="tool" aria-label="Subtract"><svg><use href="#subtract"/></svg></button>
      <button class="tool" aria-label="Intersect"><svg><use href="#intersect"/></svg></button>
      <button class="tool" aria-label="Split"><svg><use href="#split"/></svg></button>
      <button class="tool" aria-label="Imprint"><svg><use href="#imprint"/></svg></button>
    </div>
    <div class="toolbar" role="toolbar" aria-label="Arrange">
      <button class="tool" aria-label="Move"><svg><use href="#move"/></svg></button>
      <button class="tool" aria-label="Rotate object"><svg><use href="#rotobj"/></svg></button>
      <button class="tool" aria-label="Mirror"><svg><use href="#mirror"/></svg></button>
    </div>
    <div class="toolbar" role="toolbar" aria-label="Edge">
      <button class="tool" aria-label="Fillet"><svg><use href="#fillet"/></svg></button>
      <button class="tool" aria-label="Chamfer"><svg><use href="#chamfer"/></svg></button>
    </div>
    <div class="toolbar" role="toolbar" aria-label="Duplicate">
      <button class="tool" aria-label="Duplicate along line"><svg><use href="#dupline"/></svg></button>
      <button class="tool" aria-label="Duplicate around axis"><svg><use href="#duprot"/></svg></button>
      <button class="tool" aria-label="Duplicate mirror"><svg><use href="#dupmir"/></svg></button>
    </div>
    <div class="toolbar toolbar-end-combo" role="toolbar" aria-label="Material">
      <button class="tool" aria-label="Layers"><svg><use href="#layers"/></svg></button>
      <i class="sep"></i>
      <label class="combo combo-l"><select aria-label="Material"><option>copper</option></select><span class="drop"></span></label>
      <i class="sep"></i>
      <label class="combo combo-l"><select aria-label="Object type"><option>Model</option></select><span class="drop"></span></label>
    </div>
    <div class="toolbar" role="toolbar" aria-label="Section">
      <button class="tool" aria-label="Cover lines"><svg><use href="#section"/></svg></button>
      <button class="tool" aria-label="Section plane"><svg><use href="#section2"/></svg></button>
    </div>
    <div class="toolbar" role="toolbar" aria-label="Coordinate systems">
      <button class="tool" aria-label="Offset CS"><svg><use href="#csrel"/></svg></button>
      <button class="tool" aria-label="Rotated CS"><svg><use href="#csrot"/></svg></button>
      <button class="tool" aria-label="Offset and rotated CS"><svg><use href="#csboth"/></svg></button>
      <button class="tool" aria-label="Face CS"><svg><use href="#csface"/></svg></button>
      <button class="tool" aria-label="Object CS offset"><svg><use href="#csobj"/></svg></button>
      <button class="tool" aria-label="Object CS rotated"><svg><use href="#csobj2"/></svg></button>
      <button class="tool" aria-label="Object CS both"><svg><use href="#csobj3"/></svg></button>
    </div>
  </div>

  <div class="toolbar-row row-design">
    <div class="toolbar" role="toolbar" aria-label="Designs">
      <button class="tool" aria-label="Insert 3D design"><svg><use href="#q3d"/></svg></button>
      <button class="tool" aria-label="Insert 2D design"><svg><use href="#q2d"/></svg></button>
    </div>
  </div>
</div>

<main class="workspace">
  <aside class="dock">
    <section class="pane">
      <header class="pane-head"><h2>Project Manager</h2>
        <button aria-label="Collapse Project Manager"><svg viewBox="0 0 8 8"><path d="M1 6l3-4 3 4z"/></svg></button>
        <button aria-label="Close Project Manager"><svg viewBox="0 0 8 8"><path d="M0 0h3l1 2 1-2h3L6 4l2 4H5L4 6 3 8H0l2-4z"/></svg></button>
      </header>
      <div class="tab-frame">
        <div class="tree-box">
          <ul class="tree">
            <li class="root"><span class="rail exp minus"></span><svg><use href="#t-q3d"/></svg><span class="label">Q3DModel1</span></li>
            <li><span class="rail"></span><span class="rail stub"></span><svg><use href="#t-model"/></svg><span class="label">Model</span></li>
            <li><span class="rail"></span><span class="rail stub"></span><svg><use href="#t-bound"/></svg><span class="label">Boundaries</span></li>
            <li><span class="rail"></span><span class="rail exp"></span><svg><use href="#t-nets"/></svg><span class="label">Nets</span></li>
            <li><span class="rail"></span><span class="rail stub"></span><svg><use href="#t-mesh"/></svg><span class="label">Mesh Operations</span></li>
            <li><span class="rail"></span><span class="rail exp"></span><svg><use href="#t-reduce"/></svg><span class="label">Reduce Matrix</span></li>
            <li><span class="rail"></span><span class="rail exp"></span><svg><use href="#t-analysis"/></svg><span class="label">Analysis</span></li>
            <li><span class="rail"></span><span class="rail stub"></span><svg><use href="#t-opt"/></svg><span class="label">Optimetrics</span></li>
            <li><span class="rail"></span><span class="rail stub"></span><svg><use href="#t-results"/></svg><span class="label">Results</span></li>
          </ul>
          <div class="scroll-v">
            <button aria-label="Scroll up"><svg viewBox="0 0 10 10"><path d="M1 7l4-4 4 4"/></svg></button>
            <div class="thumb"></div>
            <button aria-label="Scroll down"><svg viewBox="0 0 10 10"><path d="M1 3l4 4 4-4"/></svg></button>
          </div>
        </div>
      </div>
      <button class="tab">Project</button>
    </section>
    <section class="pane">
      <header class="pane-head"><h2>Properties</h2>
        <button aria-label="Collapse Properties"><svg viewBox="0 0 8 8"><path d="M1 6l3-4 3 4z"/></svg></button>
        <button aria-label="Close Properties"><svg viewBox="0 0 8 8"><path d="M0 0h3l1 2 1-2h3L6 4l2 4H5L4 6 3 8H0l2-4z"/></svg></button>
      </header>
      <div class="tab-frame">
        <div class="prop-box">
          <table class="props">
            <colgroup><col class="c-name"><col class="c-value"><col class="c-unit"><col class="c-eval"><col></colgroup>
            <thead><tr><th>Name</th><th>Value</th><th>Unit</th><th>Evaluated Va...</th><th></th></tr></thead>
          </table>
        </div>
      </div>
      <button class="tab">Variables</button>
    </section>
  </aside>

  <section class="history" aria-label="Model history">
    <ul class="history-tree">
      <li><span class="rail exp"></span><svg><use href="#h-solids"/></svg><span class="label selected">Solids</span></li>
      <li><span class="rail exp"></span><svg><use href="#h-coord"/></svg><span class="label">Coordinate Systems</span></li>
      <li><span class="rail exp"></span><svg><use href="#h-planes"/></svg><span class="label">Planes</span></li>
      <li><span class="rail exp"></span><svg><use href="#h-lists"/></svg><span class="label">Lists</span></li>
    </ul>
    <div class="scroll-h">
      <button aria-label="Scroll left"><svg viewBox="0 0 10 10"><path d="M7 1L3 5l4 4"/></svg></button>
      <div class="thumb"></div>
      <button aria-label="Scroll right"><svg viewBox="0 0 10 10"><path d="M3 1l4 4-4 4"/></svg></button>
    </div>
  </section>

  <section class="viewport" aria-label="3D Modeler">
    <svg class="scene" viewBox="496 167 1422 637" preserveAspectRatio="xMidYMid slice">
      <g id="grid"></g>
      <!-- substrate outline -->
      <g class="substrate">
        <path d="M1233 200L1505 248L1183 768L910 720z"/>
        <path d="M1233 204L1505 252L1183 772L910 725z"/>
        <path d="M1233 200v4M1505 248v4M1183 768v4M910 720v5"/>
      </g>
      <!-- pad side walls -->
      <g class="pad-wall">
        <path d="M975 660v9l13 6h12l16-7v-8z"/>
        <path d="M1160 700l2 6 22 4 9-1 10-12v-9z"/>
      </g>
      <!-- copper traces -->
      <g class="copper">
        <path d="M975 654l12-7h11l23-36 8-3 199-52 168-271 6-2v-3h10l1 1-2 3v8l-168 273-8 3-200 54-22 34 2 7v6l9 12 115 21 15-4 10-15 11-3 240-388 10-4v-3h9l1 3-3 2v7l-240 387 10 5-1 7-10 11h-24l-14 4-14 1-127-22-16-17h-5l-17-6z"/>
      </g>
      <g class="pad"><ellipse cx="996" cy="659" rx="13" ry="7"/><ellipse cx="1179" cy="692" rx="13" ry="7"/></g>
      <!-- scale bar -->
      <path class="bar-open" d="M937 769.500h270v11h-270z"/>
      <path class="bar-full" d="M1207 769h270v12h-270z"/>
      <g class="scale-text"><text x="937" y="800">0</text><text x="1207" y="800">15</text><text x="1497" y="800">30 (mm)</text></g>
      <!-- axis triad -->
      <g class="triad">
        <path d="M1842 730l-10 13" stroke="#006400" stroke-width="2"/><path d="M1834 740l-8 4-1 7 5 2 5-6z" fill="#006400"/>
        <path d="M1842 730l36 5" stroke="#0000d0" stroke-width="2"/><path d="M1877 731l12 6-12 2z" fill="#0000b0"/>
        <path d="M1842 730v-34" stroke="#c00000" stroke-width="3"/><path d="M1837 697l5-11 5 11z" fill="#d80000"/>
        <text x="1847" y="682" fill="#f00000">Z</text><text x="1900" y="740" fill="#0000f0">Y</text><text x="1829" y="758" fill="#006400">X</text>
      </g>
    </svg>
  </section>
</main>

<div class="bottom">
  <section class="log">
    <header class="side-head">
      <button aria-label="Close Message Manager"><svg viewBox="0 0 8 8"><path d="M0 0h3l1 2 1-2h3L6 4l2 4H5L4 6 3 8H0l2-4z"/></svg></button>
      <button aria-label="Collapse Message Manager"><svg viewBox="0 0 8 8"><path d="M6 1L2 4l4 3z"/></svg></button>
      <h2>Message Manager</h2>
    </header>
    <div class="log-body messages"></div>
  </section>
  <section class="log">
    <header class="side-head">
      <button aria-label="Close Progress"><svg viewBox="0 0 8 8"><path d="M0 0h3l1 2 1-2h3L6 4l2 4H5L4 6 3 8H0l2-4z"/></svg></button>
      <button aria-label="Collapse Progress"><svg viewBox="0 0 8 8"><path d="M6 1L2 4l4 3z"/></svg></button>
      <h2>Progress</h2>
    </header>
    <div class="log-body progress"></div>
  </section>
</div>

<footer class="statusbar">
  <span class="path">G:/PCB Project/test.q3dx</span>
  <span class="cell"></span><span class="cell num">NUM</span><span class="cell"></span>
</footer>
<script src="grid.js"></script>
</body>
</html>
```
FILE: styles.css
```css
:root {
  --panel: #f0f0f0;
  --bar: #e8f0e8;
  --field: #c7edcc;
  --dark: #808080;
  --ink: #1a1a1a;
  --ui: "Noto Sans", "Open Sans", sans-serif;
}

* { box-sizing: border-box; }

body {
  margin: 0;
  height: 100vh;
  display: flex;
  flex-direction: column;
  overflow: hidden;
  background: var(--panel);
  color: var(--ink);
  font: 16px/20px var(--ui);
}

h1, h2 { margin: 0; font-weight: 400; }
ul { margin: 0; padding: 0; list-style: none; }
button { margin: 0; padding: 0; border: 0; background: none; color: inherit; font: inherit; }
svg { display: block; }
.sprite { position: absolute; width: 0; height: 0; }

/* shared icon paint */
.ol { stroke: #3c4640; }
.gr { stroke: #a0a8a0; }
.bl { stroke: #3c4cff; }
.yl { fill: #eef050; stroke: #54541c; }
.yf { fill: #eef236; stroke: #54541c; stroke-width: 1.4; }
:is(.ol, .gr, .bl):not([fill]) { fill: none; }
:is(.ol, .gr, .bl):not([stroke-width]) { stroke-width: 1.6; }

/* title and menu */
.titlebar { display: flex; align-items: center; height: 27px; padding: 0 3px 3px 2px; background: #fff; }
.app-icon { width: 20px; height: 20px; margin-right: 5px; }
.title { flex: 1; font-size: 16px; line-height: 22px; color: #000; }
.window-controls { display: flex; }
.win-btn { width: 58px; height: 24px; display: grid; place-items: center; }
.win-btn svg { width: 12px; height: 12px; fill: none; stroke: #000; }

.menubar { display: flex; align-items: center; gap: 16px; height: 24px; padding: 0 0 2px 9px; background: #fff; border-top: 1px solid #e0e0e0; }
.doc-icon { width: 19px; height: 15px; margin-right: -7px; }
.mdi-controls { display: flex; gap: 2px; margin-left: auto; padding-right: 1px; }
.mdi-controls button { width: 22px; height: 21px; display: grid; place-items: center; border: 1px solid #ececec; }
.mdi-controls svg { width: 12px; height: 12px; fill: none; stroke: #74848f; stroke-width: 2.6; }
.mdi-controls .thin { stroke-width: 1.6; }

/* toolbars */
.toolbars { background: var(--bar); border-bottom: 1px solid #c4ccc4; }
.toolbar-row { display: flex; align-items: center; height: 38px; border-bottom: 2px solid #f0f0f0; }
.row-standard { gap: 9px; }
.row-model { gap: 8px; }
.row-design { border-bottom: 0; height: 35px; }
.toolbar { display: flex; align-items: center; }
.toolbar::before {
  content: "";
  width: 5px;
  height: 24px;
  margin: 0 4px 0 3px;
  background: repeating-linear-gradient(#3c443c 0 2px, var(--bar) 2px 3px);
}
.toolbar-end-combo { padding-right: 5px; }
.tool { width: 29px; height: 28px; display: grid; place-items: center; }
.tool svg { width: 20px; height: 20px; }
.tool.active { background: #cce4e0; border: 1px solid #2288e0; }
.tool-space { width: 29px; }
.sep { width: 1px; height: 27px; margin: 0 4px; background: #a8b2a8; }

.combo {
  display: grid;
  grid-template-columns: 1fr 20px;
  height: 24px;
  margin-right: 2px;
  background: var(--field);
  border: 2px solid;
  border-color: #808080 #fafafa #fafafa #808080;
}
.combo-s { width: 60px; }
.combo-m { width: 98px; }
.combo-l { width: 123px; }
.combo select {
  grid-area: 1 / 1 / 2 / 3;
  appearance: none;
  min-width: 0;
  padding: 0 2px;
  border: 0;
  background: none;
  color: #000;
  font: 13px/20px "Liberation Mono", monospace;
}
.drop {
  grid-area: 1 / 2;
  display: grid;
  place-items: center;
  pointer-events: none;
  background: var(--panel);
  border: 1px solid;
  border-color: #fff #707070 #707070 #fff;
}
.drop::after { content: ""; border: 5px solid transparent; border-top-color: #000; border-bottom: 0; }

/* docked panes */
.workspace { flex: 1; min-height: 0; display: flex; border-bottom: 2px solid var(--dark); }
.dock { width: 353px; display: flex; flex-direction: column; border-left: 1px solid #d0d0d0; }
.pane { flex: 1 1 20px; min-height: 0; display: flex; flex-direction: column; align-items: flex-start; padding: 2px 3px 16px; }
.pane + .pane { flex-basis: 24px; border-top: 2px solid var(--dark); padding: 2px 3px 14px; }
.pane-head {
  align-self: stretch;
  display: flex;
  align-items: center;
  height: 18px;
  padding: 0 1px 0 3px;
  margin-right: 1px;
  border: 1px solid #a8a8a8;
  border-radius: 2px;
}
.pane-head h2 { flex: 1; font-size: 13px; line-height: 16px; }
.pane-head button { width: 16px; height: 16px; display: grid; place-items: center; }
.pane-head svg, .side-head svg { width: 8px; height: 8px; fill: #000; }

.tab-frame {
  flex: 1;
  min-height: 0;
  width: 333px;
  margin: 6px 0 0 7px;
  padding: 3px 5px 1px 3px;
  border: 2px solid;
  border-color: #fff var(--dark) var(--dark) #fff;
  display: flex;
}
.tab {
  margin: -2px 0 0 8px;
  height: 23px;
  padding: 1px 8px 0;
  background: var(--panel);
  border-right: 2px solid var(--dark);
  border-bottom: 2px solid var(--dark);
  border-radius: 0 0 4px 2px;
}
.tree-box, .prop-box {
  flex: 1;
  min-height: 0;
  display: flex;
  background: var(--field);
  border: 2px solid;
  border-color: var(--dark) #fff #fff var(--dark);
}

.tree { flex: 1; display: flex; flex-direction: column; padding-left: 22px; }
.tree li { flex: 1; display: flex; align-items: center; }
.tree svg { width: 20px; height: 20px; margin: 0 6px 0 1px; }
.tree .label { padding-bottom: 1px; }
.tree .root { font-weight: 700; }

/* dotted connector with optional expander box */
.rail {
  align-self: stretch;
  flex: none;
  width: 24px;
  display: grid;
  place-items: center;
  background: repeating-linear-gradient(#808880 0 1px, transparent 1px 2px) 12px 0 / 1px 100% no-repeat;
}
.rail.stub, .rail.exp {
  background:
    repeating-linear-gradient(#808880 0 1px, transparent 1px 2px) 12px 0 / 1px 100% no-repeat,
    repeating-linear-gradient(90deg, #808880 0 1px, transparent 1px 2px) 12px 50% / 12px 1px no-repeat;
}
.rail.exp::before {
  content: "";
  width: 11px;
  height: 11px;
  border: 1px solid #707870;
  background:
    linear-gradient(#000, #000) center / 5px 1px no-repeat,
    linear-gradient(#000, #000) center / 1px 5px no-repeat,
    var(--field);
}
.rail.exp.minus::before { background: linear-gradient(#000, #000) center / 5px 1px no-repeat, var(--field); }

.scroll-v { width: 21px; display: flex; flex-direction: column; background: var(--panel); }
.scroll-v .thumb { flex: 1; margin: 14px 1px 47px 0; background: #cdcdcd; }
.scroll-v button, .scroll-h button { width: 20px; height: 24px; display: grid; place-items: center; }
.scroll-v svg, .scroll-h svg { width: 10px; height: 10px; fill: none; stroke: #505050; stroke-width: 2; }

.props { align-self: flex-start; width: 100%; border-collapse: separate; border-spacing: 0; table-layout: fixed; }
.c-name { width: 79px; }
.c-value { width: 59px; }
.c-unit { width: 55px; }
.c-eval { width: 110px; }
.props th {
  height: 25px;
  padding: 0;
  background: var(--panel);
  border: 1px solid;
  border-color: #fff var(--dark) var(--dark) #fff;
  font-weight: 400;
  font-size: 15px;
  white-space: nowrap;
  overflow: hidden;
}

.history {
  width: 129px;
  margin: 1px 5px 5px 7px;
  display: flex;
  flex-direction: column;
  background: var(--field);
  border: 2px solid;
  border-color: var(--dark) #fff #fff var(--dark);
  font-size: 15px;
}
.history-tree { flex: 1; overflow: hidden; }
.history-tree li { display: flex; align-items: center; height: 25px; }
.history-tree svg { flex: none; width: 20px; height: 20px; }
.history-tree .label { margin-left: 4px; padding: 1px 3px 3px; white-space: nowrap; }
.history-tree .selected { background: var(--panel); }
.history-tree li:first-child .rail { background-position: 12px 12px, 12px 50%; }
.history-tree li:last-child .rail { background-size: 1px 50%, 12px 1px; }
.scroll-h { display: flex; height: 21px; align-items: center; background: var(--panel); }
.scroll-h .thumb { width: 53px; height: 18px; margin: 0 auto 0 3px; background: #cdcdcd; }

.viewport {
  flex: 1;
  min-width: 0;
  margin: 2px 0 5px;
  border: 2px solid;
  border-color: #707070 #f8f8f8 #f8f8f8 #707070;
  background: #fff;
}
.scene { width: 100%; height: 100%; }
.grid-minor { stroke: #e4e4e4; stroke-width: 1; shape-rendering: crispEdges; }
.grid-major { stroke: #dfdfdf; stroke-width: 2; }
.substrate { fill: none; stroke: #b8b8b8; stroke-width: 1; }
.pad-wall { fill: #107888; stroke: #0a4a58; }
.copper { fill: #0000d2; stroke: #000090; stroke-width: 1; }
.pad { fill: #aaa; stroke: #504860; stroke-dasharray: 3 1; }
.bar-open { fill: #fff; stroke: #000; }
.bar-full { fill: #000; }
.scale-text { font: 15px "Liberation Sans", sans-serif; text-anchor: middle; fill: #202020; }
.triad { fill: none; font: 700 14px "Liberation Sans", sans-serif; text-anchor: middle; }

/* message and progress panes */
.bottom { display: flex; height: 190px; border-bottom: 2px solid #b8b8b8; }
.log { flex: 1; display: flex; gap: 3px; padding: 3px 3px 2px; }
.log:first-child { padding: 3px 9px 2px 4px; border-right: 2px solid var(--dark); }
.side-head {
  width: 16px;
  display: flex;
  flex-direction: column;
  align-items: center;
  padding: 2px 0 3px;
  border: 1px solid #a8a8a8;
  border-radius: 2px;
}
.side-head button { width: 14px; height: 16px; display: grid; place-items: center; }
.side-head h2 { margin-top: auto; writing-mode: vertical-rl; rotate: 180deg; font-size: 12px; line-height: 14px; }
.log-body { flex: 1; margin: 1px 0 2px; background: var(--field); border: 2px solid; }
.messages { border-color: #a8acb4; box-shadow: inset 0 0 0 1px #fff; }
.progress { border-color: var(--dark) #fff #fff var(--dark); }

.statusbar { display: flex; align-items: flex-end; gap: 3px; height: 23px; padding-left: 2px; line-height: 17px; border-top: 1px solid #fff; }
.path { flex: 1; }
.cell { width: 35px; height: 19px; border-top: 1px solid #a0a0a0; border-left: 1px solid #a0a0a0; }
.num { width: 45px; padding: 1px 0 0 3px; border-right: 1px solid #fff; font-size: 15px; }
.cell:last-child { width: 44px; }
```
FILE: grid.js
```js
// Ground plane grid: u runs along Y, v along X, in major-cell units.
const origin = [628.4, 238.3];
const u = [168.57, 30.07];
const v = [-55.4, 90];
const uRange = [-6, 8.6];
const vRange = [-8, 9];
const DIVISIONS = 5;

const at = (a, b) => [origin[0] + a * u[0] + b * v[0], origin[1] + a * u[1] + b * v[1]];
const segment = (p, q) => `M${p[0].toFixed(1)} ${p[1].toFixed(1)}L${q[0].toFixed(1)} ${q[1].toFixed(1)}`;

const paths = { minor: "", major: "" };
for (let i = uRange[0] * DIVISIONS; i <= uRange[1] * DIVISIONS; i++) {
  paths[i % DIVISIONS ? "minor" : "major"] += segment(at(i / DIVISIONS, vRange[0]), at(i / DIVISIONS, vRange[1]));
}
for (let i = vRange[0] * DIVISIONS; i <= vRange[1] * DIVISIONS; i++) {
  paths[i % DIVISIONS ? "minor" : "major"] += segment(at(uRange[0], i / DIVISIONS), at(uRange[1], i / DIVISIONS));
}

const grid = document.getElementById("grid");
for (const kind of ["minor", "major"]) {
  const path = document.createElementNS("http://www.w3.org/2000/svg", "path");
  path.setAttribute("class", `grid-${kind}`);
  path.setAttribute("d", paths[kind]);
  grid.append(path);
}
```
